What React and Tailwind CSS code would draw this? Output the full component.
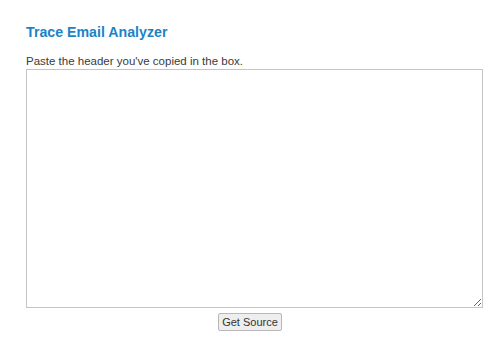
import React, { useState } from "react";

export default function App() {
  const [header, setHeader] = useState("");

  return (
    <div className="w-[500px] h-[355px] bg-white px-[26px] pt-[24px] font-['Liberation_Sans',Arial,sans-serif]">
      <h1 className="text-[14.2px] leading-[16px] font-bold text-[#1a84c6]">
        Trace Email Analyzer
      </h1>
      <form
        className="mt-[14px] flex flex-col"
        onSubmit={(e) => e.preventDefault()}
      >
        <label
          htmlFor="header"
          className="text-[11.5px] leading-[14px] text-[#3a3a3a]"
        >
          Paste the header you've copied in the box.
        </label>
        <textarea
          id="header"
          value={header}
          onChange={(e) => setHeader(e.target.value)}
          className="mt-[1px] w-[457px] h-[239px] border border-[#c4c4c4] bg-white resize text-[12px] p-[2px] outline-none"
        />
        <div className="flex justify-center mt-[5px]">
          <button
            type="submit"
            className="h-[18px] px-[3px] text-[11px] leading-[16px] text-[#333] bg-[#eeeeee] border border-[#b8b8b8] rounded-[2px]"
          >
            Get Source
          </button>
        </div>
      </form>
    </div>
  );
}
